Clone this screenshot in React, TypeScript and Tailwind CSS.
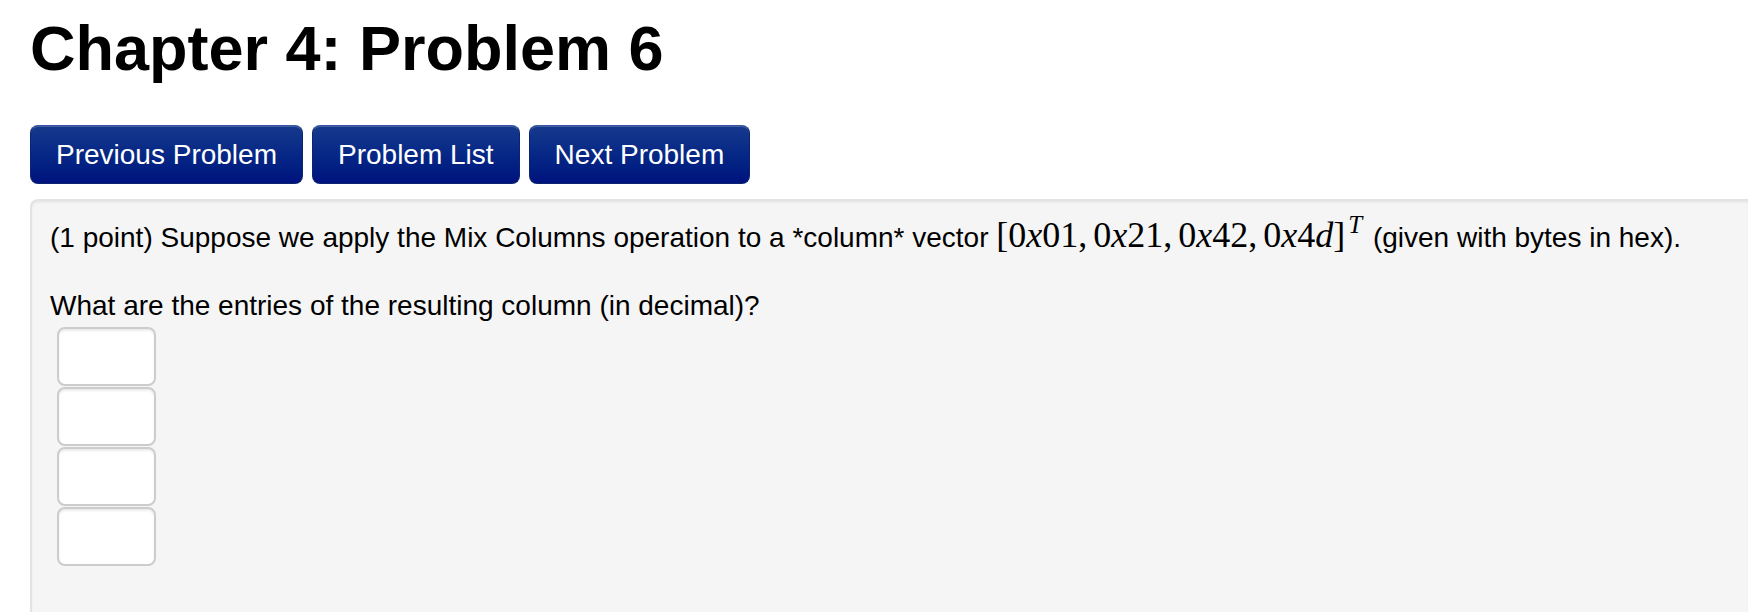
import React from "react";

const sans = { fontFamily: '"Liberation Sans", Arial, Helvetica, sans-serif' };

function Btn({ label }: { label: string }) {
  return (
    <button
      className="h-[59px] px-[25px] flex items-center rounded-[8px] border border-[#0a2470] border-t-[#3554a6] text-white text-[28px] leading-[40px] bg-gradient-to-b from-[#16398d] to-[#00117e] shadow-[inset_0_1px_0_rgba(255,255,255,0.2)]"
      style={sans}
    >
      {label}
    </button>
  );
}

function Math() {
  const serif = '"Liberation Serif", "Times New Roman", serif';
  const comma = <span className="mr-[6px]">,</span>;
  return (
    <span className="text-[36px] leading-[28px] mr-[3px]" style={{ fontFamily: serif }}>
      [0<i>x</i>01{comma}0<i>x</i>21{comma}0<i>x</i>42{comma}0<i>x</i>4<i>d</i>]
      <sup className="text-[25px] italic relative top-[-14px] ml-[3px]">T</sup>
    </span>
  );
}

export default function App() {
  return (
    <div className="w-[1748px] h-[612px] overflow-hidden bg-white flex flex-col pl-[30px]" style={sans}>
      <h1 className="mt-[13px] text-[63px] leading-[70px] font-bold text-black">Chapter 4: Problem 6</h1>
      <div className="mt-[42px] flex gap-[9px]">
        <Btn label="Previous Problem" />
        <Btn label="Problem List" />
        <Btn label="Next Problem" />
      </div>
      <div className="mt-[15px] flex-1 bg-[#f5f5f5] border-l-2 border-t-2 border-[#e3e3e3] rounded-tl-[8px] shadow-[inset_0_2px_2px_rgba(0,0,0,0.05)] pl-[18px] pt-[17px]">
        <div className="h-[40px] text-[28px] leading-[40px] text-black whitespace-nowrap">
          (1 point) Suppose we apply the Mix Columns operation to a *column* vector <Math /> (given with bytes in hex).
        </div>
        <div className="mt-[28px] h-[40px] text-[28px] leading-[40px] text-black">
          What are the entries of the resulting column (in decimal)?
        </div>
        <div className="mt-[1px] ml-[7px] flex flex-col gap-[1px]">
          {[0, 1, 2, 3].map((i) => (
            <div
              key={i}
              className="w-[99px] h-[59px] bg-white border-2 border-[#cccccc] rounded-[8px] shadow-[inset_0_2px_2px_rgba(0,0,0,0.075)]"
            />
          ))}
        </div>
      </div>
    </div>
  );
}
